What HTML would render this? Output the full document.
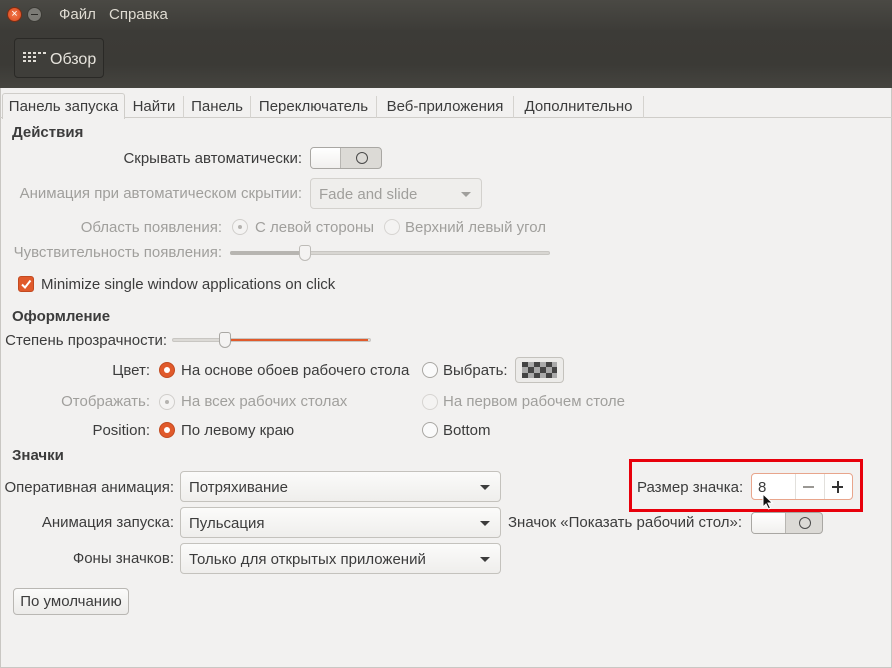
<!DOCTYPE html>
<html><head><meta charset="utf-8"><style>
*{box-sizing:border-box;margin:0;padding:0}
body{width:892px;height:668px;overflow:hidden;background:#f2f1f0;font-family:"Liberation Sans","DejaVu Sans",sans-serif;font-size:15px;color:#3c3c3c;position:relative}
.a{position:absolute;white-space:nowrap;line-height:20px}
.r{position:absolute;white-space:nowrap;line-height:20px;text-align:right}
.d{color:#a09f9c}
.b{font-weight:bold;font-size:15px}
.combo{position:absolute;border:1px solid #c4c2bd;border-radius:4px;background:linear-gradient(#fbfbfa,#efeeec);padding-left:8px;line-height:31px}
.combo:after{content:"";position:absolute;right:10px;top:13px;border-left:5px solid transparent;border-right:5px solid transparent;border-top:5px solid #3c3c3c}
.combo.dis{background:#efeeec;color:#a09f9c;border-color:#d3d1cd}
.combo.dis:after{border-top-color:#a09f9c}
.rad{position:absolute;width:16px;height:16px;border-radius:50%;border:1px solid #a9a7a3;background:#fafafa}
.rad.on{background:#e05a2b;border-color:#c24a20}
.rad.on:after{content:"";position:absolute;left:4px;top:4px;width:6px;height:6px;border-radius:50%;background:#fff}
.rad.don{border-color:#d0cecb;background:#f4f3f2}
.rad.don:after{content:"";position:absolute;left:5px;top:5px;width:4px;height:4px;border-radius:50%;background:#b5b3b0}
.rad.doff{border-color:#d6d4d1;background:#f4f3f2}
.sw{position:absolute;width:72px;height:22px;border:1px solid #a9a7a3;border-radius:4px;background:#dcdad6;overflow:hidden}
.sw .k{position:absolute;left:0;top:0;width:30px;height:20px;background:linear-gradient(#fff,#f1f0ee);border-right:1px solid #b8b6b2}
.sw .o{position:absolute;left:45px;top:4px;width:12px;height:12px;border:1.5px solid #4a4a4a;border-radius:50%}
.tab{position:absolute;top:96px;height:22px;line-height:22px;border-right:1px solid #d5d3cf;text-align:center}
</style></head><body>
<div style="position:absolute;left:0;top:0;width:892px;height:30px;background:linear-gradient(#4a4944,#3d3c38)"></div>
<div style="position:absolute;left:7px;top:7px;width:15px;height:15px;border-radius:50%;background:radial-gradient(#f37a4b,#d9461c);border:1px solid #7a2c12;color:#fff;font-size:11px;line-height:13px;text-align:center">×</div>
<div style="position:absolute;left:27px;top:7px;width:15px;height:15px;border-radius:50%;background:#7c7b76;border:1px solid #3a3934"><div style="position:absolute;left:3px;top:6px;width:7px;height:1px;background:#2c2b28"></div></div>
<div class="a" style="left:59px;top:5px;color:#dfdbd2;font-size:15px">Файл</div>
<div class="a" style="left:109px;top:5px;color:#dfdbd2;font-size:15px">Справка</div>
<div style="position:absolute;left:0;top:30px;width:892px;height:58px;background:linear-gradient(#3c3b37,#3b3a36 60%,#45443f)"></div>
<div style="position:absolute;left:14px;top:38px;width:90px;height:40px;border:1px solid #2a2926;border-radius:4px;background:#3f3e3a"></div>
<svg style="position:absolute;left:23px;top:52px" width="24" height="12" fill="#e0ddd6"><rect x="0" y="0" width="3" height="2"/><rect x="5" y="0" width="3" height="2"/><rect x="10" y="0" width="3" height="2"/><rect x="15" y="0" width="3" height="2"/><rect x="20" y="0" width="3" height="2"/><rect x="0" y="4" width="3" height="2"/><rect x="5" y="4" width="3" height="2"/><rect x="10" y="4" width="3" height="2"/><rect x="0" y="8" width="3" height="2"/><rect x="5" y="8" width="3" height="2"/><rect x="10" y="8" width="3" height="2"/></svg>
<div class="a" style="left:50px;top:50px;color:#e6e3dc;font-size:16px">Обзор</div>
<div style="position:absolute;left:0;top:88px;width:892px;height:580px;border-left:1px solid #c9c7c3;border-right:1px solid #c9c7c3;border-bottom:1px solid #c9c7c3"></div>
<div style="position:absolute;left:0;top:117px;width:892px;height:1px;background:#cfcdc9"></div>
<div class="tab" style="left:2px;top:93px;width:123px;height:26px;line-height:26px;background:#f2f1f0;border:1px solid #cfcdc9;border-bottom:none;border-radius:3px 3px 0 0">Панель запуска</div>
<div class="tab" style="left:125px;width:59px">Найти</div>
<div class="tab" style="left:184px;width:67px">Панель</div>
<div class="tab" style="left:251px;width:126px">Переключатель</div>
<div class="tab" style="left:377px;width:137px">Веб-приложения</div>
<div class="tab" style="left:514px;width:130px">Дополнительно</div>

<div class="a b" style="left:12px;top:123px">Действия</div>
<div class="r" style="right:590px;top:149px">Скрывать автоматически:</div>
<div class="sw" style="left:310px;top:147px"><div class="k"></div><div class="o"></div></div>
<div class="r d" style="right:590px;top:184px">Анимация при автоматическом скрытии:</div>
<div class="combo dis" style="left:310px;top:178px;width:172px;height:31px">Fade and slide</div>
<div class="r d" style="right:670px;top:218px">Область появления:</div>
<div class="rad don" style="left:232px;top:219px"></div>
<div class="a d" style="left:255px;top:218px">С левой стороны</div>
<div class="rad doff" style="left:384px;top:219px"></div>
<div class="a d" style="left:405px;top:218px">Верхний левый угол</div>
<div class="r d" style="right:670px;top:243px">Чувствительность появления:</div>
<div style="position:absolute;left:230px;top:251px;width:320px;height:4px;border-radius:2px;background:#d8d6d2;border:1px solid #c8c6c2"></div>
<div style="position:absolute;left:230px;top:251px;width:70px;height:4px;border-radius:2px;background:#b7b5b1"></div>
<div style="position:absolute;left:299px;top:245px;width:12px;height:16px;border-radius:3px 3px 6px 6px;background:#f4f3f2;border:1px solid #bdbbb7"></div>
<div style="position:absolute;left:18px;top:276px;width:16px;height:16px;border-radius:3px;background:#e05a2b;border:1px solid #c24a20"></div>
<svg style="position:absolute;left:18px;top:276px" width="16" height="16"><path d="M4 8.5 L7 11.5 L12.5 4.5" stroke="#fff" stroke-width="2" fill="none"/></svg>
<div class="a" style="left:41px;top:275px">Minimize single window applications on click</div>

<div class="a b" style="left:12px;top:307px">Оформление</div>
<div class="r" style="right:725px;top:331px">Степень прозрачности:</div>
<div style="position:absolute;left:172px;top:338px;width:199px;height:4px;border-radius:2px;background:#dcdad6;border:1px solid #c8c6c2"></div>
<div style="position:absolute;left:228px;top:339px;width:140px;height:2px;background:#e05a2b"></div>
<div style="position:absolute;left:219px;top:332px;width:12px;height:16px;border-radius:3px 3px 6px 6px;background:#f4f3f2;border:1px solid #a9a7a3"></div>
<div class="r" style="right:742px;top:361px">Цвет:</div>
<div class="rad on" style="left:159px;top:362px"></div>
<div class="a" style="left:181px;top:361px">На основе обоев рабочего стола</div>
<div class="rad" style="left:422px;top:362px"></div>
<div class="a" style="left:443px;top:361px">Выбрать:</div>
<div style="position:absolute;left:515px;top:357px;width:49px;height:26px;border:1px solid #c4c2bd;border-radius:4px;background:#ecebe9"></div>
<svg style="position:absolute;left:522px;top:362px" width="35" height="16"><rect width="35" height="16" fill="#aaa"/><g fill="#444"><rect x="0" y="0" width="6" height="5"/><rect x="12" y="0" width="6" height="5"/><rect x="24" y="0" width="6" height="5"/><rect x="6" y="5" width="6" height="6"/><rect x="18" y="5" width="6" height="6"/><rect x="30" y="5" width="5" height="6"/><rect x="0" y="11" width="6" height="5"/><rect x="12" y="11" width="6" height="5"/><rect x="24" y="11" width="6" height="5"/></g></svg>
<div class="r d" style="right:742px;top:392px">Отображать:</div>
<div class="rad don" style="left:159px;top:394px"></div>
<div class="a d" style="left:181px;top:392px">На всех рабочих столах</div>
<div class="rad doff" style="left:422px;top:394px"></div>
<div class="a d" style="left:443px;top:392px">На первом рабочем столе</div>
<div class="r" style="right:742px;top:421px">Position:</div>
<div class="rad on" style="left:159px;top:422px"></div>
<div class="a" style="left:181px;top:421px">По левому краю</div>
<div class="rad" style="left:422px;top:422px"></div>
<div class="a" style="left:443px;top:421px">Bottom</div>

<div class="a b" style="left:12px;top:446px">Значки</div>
<div class="r" style="right:718px;top:478px">Оперативная анимация:</div>
<div class="combo" style="left:180px;top:471px;width:321px;height:31px">Потряхивание</div>
<div class="r" style="right:718px;top:513px">Анимация запуска:</div>
<div class="combo" style="left:180px;top:507px;width:321px;height:31px">Пульсация</div>
<div class="r" style="right:718px;top:549px">Фоны значков:</div>
<div class="combo" style="left:180px;top:543px;width:321px;height:31px">Только для открытых приложений</div>
<div style="position:absolute;left:13px;top:588px;width:116px;height:27px;border:1px solid #b9b7b3;border-radius:4px;background:linear-gradient(#fbfbfa,#ecebe9);line-height:26px;text-align:center">По умолчанию</div>

<div class="a" style="left:508px;top:513px">Значок «Показать рабочий стол»:</div>
<div class="sw" style="left:751px;top:512px"><div class="k" style="width:34px"></div><div class="o" style="left:47px"></div></div>

<div style="position:absolute;left:629px;top:459px;width:234px;height:53px;border:3px solid #e8000b"></div>
<div class="a" style="left:637px;top:478px">Размер значка:</div>
<div style="position:absolute;left:751px;top:473px;width:102px;height:27px;border:1px solid #e8a58c;border-radius:4px;background:#fff"></div>
<div style="position:absolute;left:795px;top:474px;width:1px;height:25px;background:#e2e0dc"></div>
<div style="position:absolute;left:824px;top:474px;width:1px;height:25px;background:#e2e0dc"></div>
<div class="a" style="left:758px;top:478px">8</div>
<div style="position:absolute;left:803px;top:486px;width:11px;height:2px;background:#9a9894"></div>
<div style="position:absolute;left:832px;top:486px;width:11px;height:2px;background:#333"></div>
<div style="position:absolute;left:837px;top:481px;width:2px;height:12px;background:#333"></div>
<svg style="position:absolute;left:762px;top:493px" width="14" height="18"><path d="M1 1 L1 14 L4 11 L6.5 16 L8.5 15 L6 10 L10.5 10 Z" fill="#111" stroke="#fff" stroke-width="1"/></svg>
</body></html>
